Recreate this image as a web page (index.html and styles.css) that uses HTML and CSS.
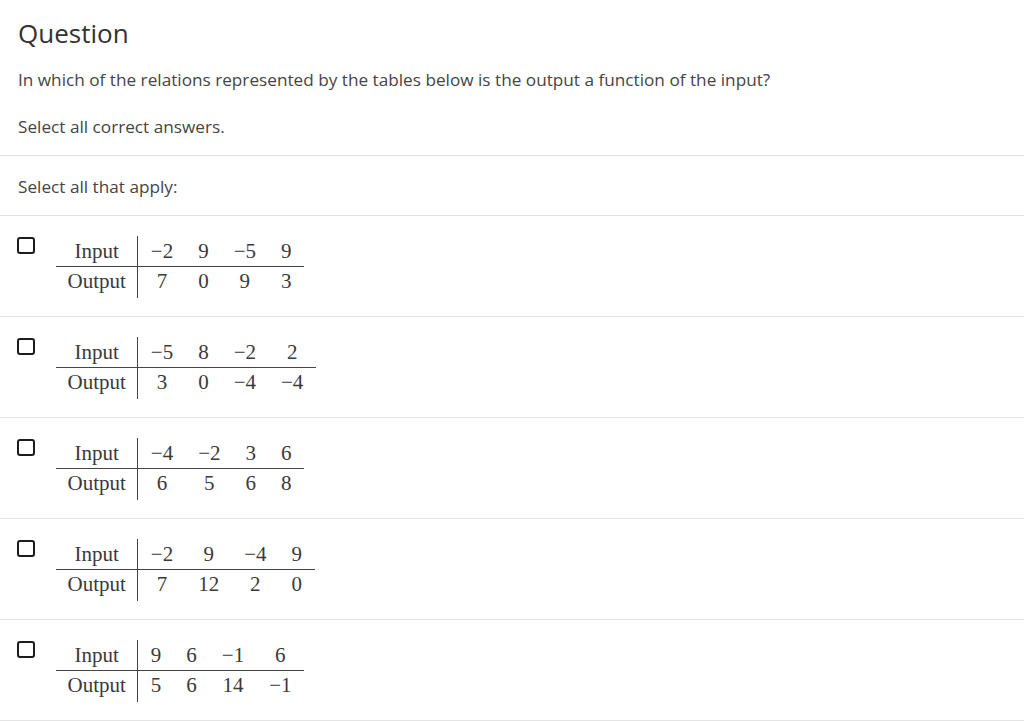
FILE: index.html
```html
<!DOCTYPE html>
<html lang="en">
<head>
<meta charset="utf-8">
<title>Question</title>
<link rel="stylesheet" href="styles.css">
</head>
<body>
<div class="intro">
  <h1 class="title">Question</h1>
  <p class="prompt">In which of the relations represented by the tables below is the output a function of the input?</p>
  <p class="prompt hint">Select all correct answers.</p>
</div>
<div class="apply">Select all that apply:</div>
<ul class="options">
  <li class="option">
    <span class="box"></span>
    <table class="rel">
      <tr><td class="head">Input</td><td>−2</td><td>9</td><td>−5</td><td>9</td></tr>
      <tr><td class="head">Output</td><td>7</td><td>0</td><td>9</td><td>3</td></tr>
    </table>
  </li>
  <li class="option">
    <span class="box"></span>
    <table class="rel">
      <tr><td class="head">Input</td><td>−5</td><td>8</td><td>−2</td><td>2</td></tr>
      <tr><td class="head">Output</td><td>3</td><td>0</td><td>−4</td><td>−4</td></tr>
    </table>
  </li>
  <li class="option">
    <span class="box"></span>
    <table class="rel">
      <tr><td class="head">Input</td><td>−4</td><td>−2</td><td>3</td><td>6</td></tr>
      <tr><td class="head">Output</td><td>6</td><td>5</td><td>6</td><td>8</td></tr>
    </table>
  </li>
  <li class="option">
    <span class="box"></span>
    <table class="rel">
      <tr><td class="head">Input</td><td>−2</td><td>9</td><td>−4</td><td>9</td></tr>
      <tr><td class="head">Output</td><td>7</td><td>12</td><td>2</td><td>0</td></tr>
    </table>
  </li>
  <li class="option">
    <span class="box"></span>
    <table class="rel">
      <tr><td class="head">Input</td><td>9</td><td>6</td><td>−1</td><td>6</td></tr>
      <tr><td class="head">Output</td><td>5</td><td>6</td><td>14</td><td>−1</td></tr>
    </table>
  </li>
</ul>
</body>
</html>
```
FILE: styles.css
```css
html, body {
  margin: 0;
  padding: 0;
  background: #fff;
}
body {
  font-family: "Open Sans", "Liberation Sans", sans-serif;
  color: #454545;
  font-size: 17.2px;
  line-height: 24px;
}
.intro {
  padding: 15px 18px 16px;
  border-bottom: 1px solid #e0e0e0;
}
.title {
  margin: 0;
  font-size: 26px;
  line-height: 36px;
  font-weight: 400;
  color: #333;
}
.prompt {
  margin: 17px 0 0;
}
.hint {
  margin-top: 23px;
}
.apply {
  padding: 19px 18px 16px;
  border-bottom: 1px solid #e0e0e0;
}
.options {
  list-style: none;
  margin: 0;
  padding: 0;
}
.option {
  display: flex;
  align-items: flex-start;
  gap: 21px;
  padding: 20px 17px 18px;
  border-bottom: 1px solid #e5e5e5;
}
.box {
  flex: none;
  width: 18px;
  height: 17px;
  margin-top: 1px;
  box-sizing: border-box;
  border: 2px solid #1c1c1c;
  border-radius: 3px;
}
.rel {
  border-collapse: collapse;
  font-family: "Liberation Serif", "Times New Roman", serif;
  font-size: 21px;
  color: #3a3a3a;
}
.rel td {
  padding: 0 12.5px;
  height: 30px;
  line-height: 30px;
  text-align: center;
  vertical-align: top;
  white-space: nowrap;
}
.rel tr:first-child td {
  border-bottom: 1px solid #444;
}
.rel tr:last-child td {
  height: 31px;
  line-height: 29px;
}
.rel td.head {
  border-right: 1px solid #444;
  padding: 0 11.5px;
}
```
